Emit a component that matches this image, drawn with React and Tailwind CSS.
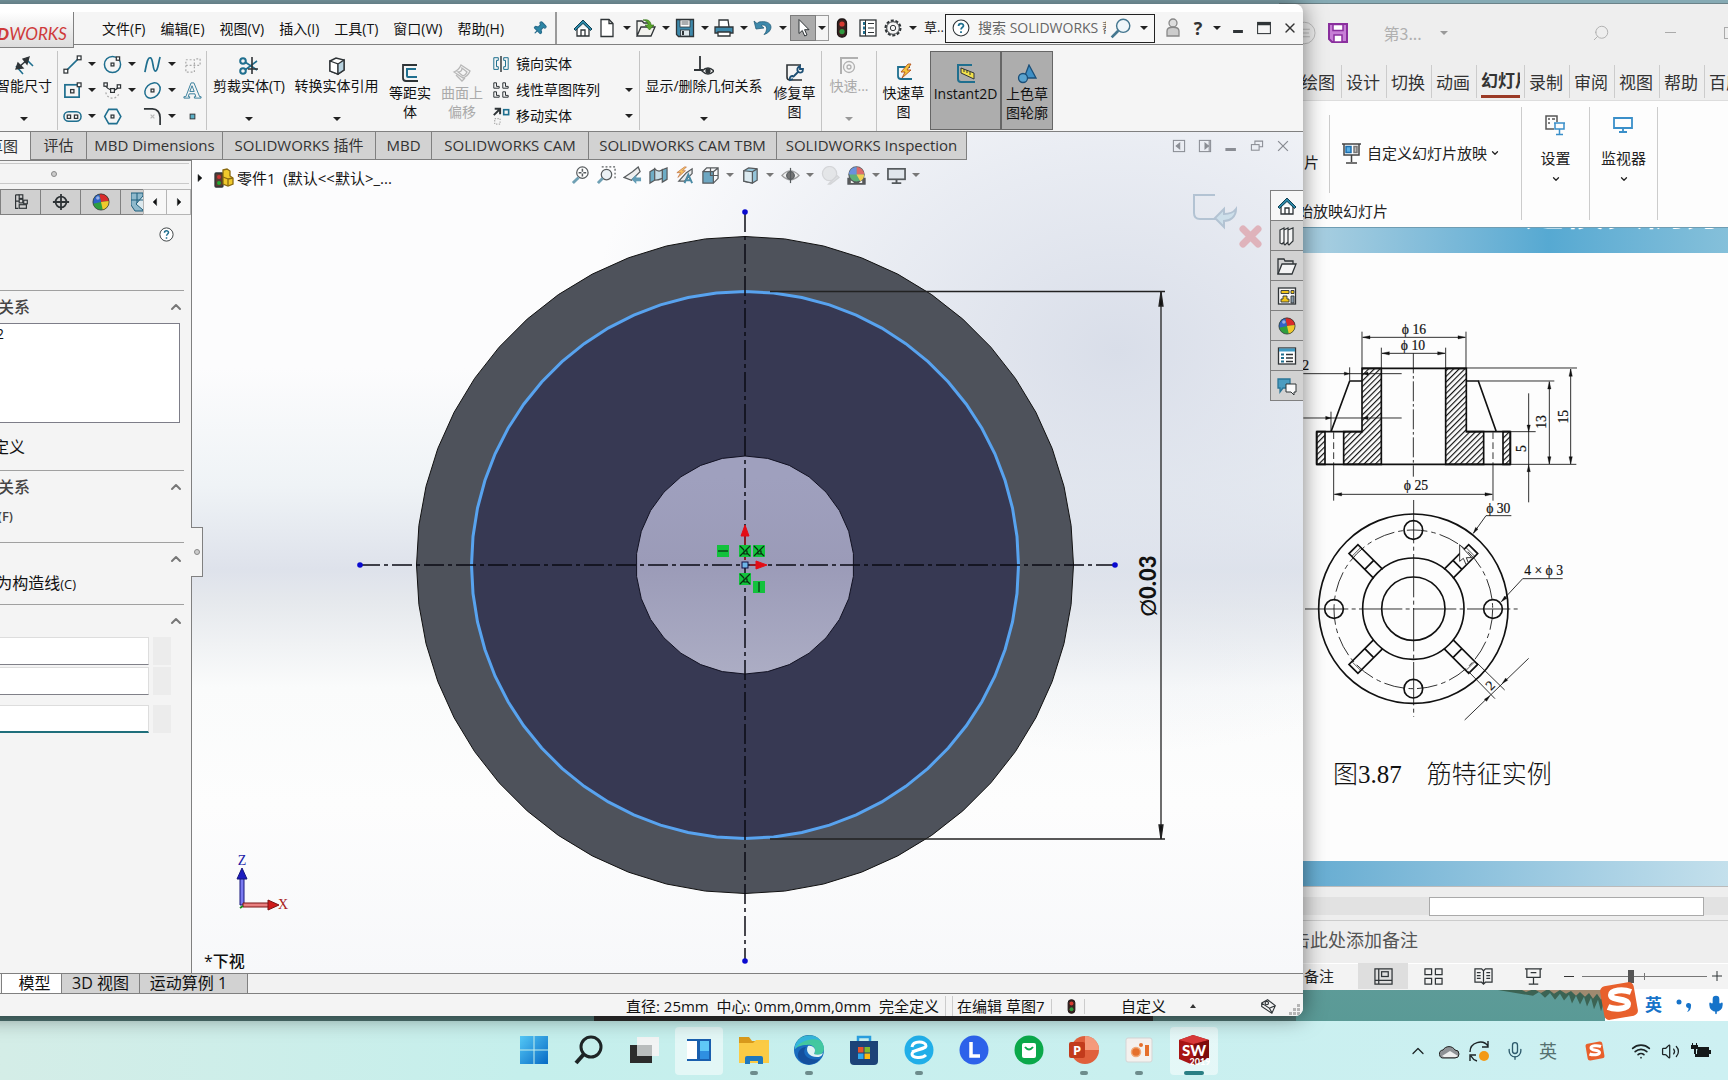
import React from 'react';
import { Pin, Wifi, Volume2, Mic, ChevronUp, ChevronDown, X, Search } from 'lucide-react';

const TEAL = '#1f6f8f';
const INK = '#2f3437';

function Ico({ children, s = 20, vb = '0 0 20 20', className = '' }) {
  return (
    <svg width={s} height={s} viewBox={vb} fill="none" stroke={INK} strokeWidth="1.3" className={`shrink-0 ${className}`} aria-hidden="true">
      {children}
    </svg>
  );
}

function Caret({ color = '#222' }) {
  return (
    <svg width="8" height="4" viewBox="0 0 8 4" className="shrink-0" aria-hidden="true">
      <path d="M0 0h8L4 4z" fill={color} />
    </svg>
  );
}

function Traffic({ s = 20 }) {
  return (
    <Ico s={s}>
      <rect x="5.5" y="1" width="9" height="18" rx="4" fill="#3a2320" stroke="#1d1515" />
      <circle cx="10" cy="6" r="2.6" fill="#d63b32" stroke="none" />
      <circle cx="10" cy="13.6" r="2.6" fill="#2f9a3f" stroke="none" />
    </Ico>
  );
}

function Ball({ s = 18 }) {
  return (
    <Ico s={s}>
      <g stroke="none">
        <circle cx="10" cy="10" r="9" fill="#2f9e3f" />
        <path d="M10 10L8 1a9 9 0 0 1 11 8z" fill="#d92b2b" />
        <path d="M10 10L8 1.2A9 9 0 0 0 1.4 12z" fill="#2f62c9" />
        <path d="M10 10l9-1a9 9 0 0 1-7 9.8z" fill="#f0c92c" />
        <circle cx="6.5" cy="5.5" r="2" fill="#fff" opacity=".5" />
      </g>
      <circle cx="10" cy="10" r="9" strokeWidth=".8" />
    </Ico>
  );
}

function House() {
  return (
    <Ico>
      <path d="M4 10v8h12v-8" fill="#fff" />
      <path d="M8 18v-6h4v6" />
      <path d="M1 11l9-9 9 9-1.5 1.5L10 5.4l-7.500 7.100z" fill="#2b87a6" stroke="#123f52" strokeWidth="1" />
    </Ico>
  );
}

function HelpRound({ s = 18 }) {
  return (
    <Ico s={s}>
      <circle cx="10" cy="10" r="8.8" fill="#fff" strokeWidth="1.2" />
      <path d="M7.300 7.800c0-3.600 5.400-3.400 5.400-.4 0 1.800-2.600 2-2.600 4.200M10 13.700v1.800" stroke={TEAL} strokeWidth="2" />
    </Ico>
  );
}

/* ---------- title bar ---------- */

const menus = ['文件(F)', '编辑(E)', '视图(V)', '插入(I)', '工具(T)', '窗口(W)', '帮助(H)'];

const fileTools = [
  {
    name: '新建',
    icon: <Ico><path d="M4 1.500h8l4 4v13H4z" fill="#fff" /><path d="M12 1.500v4h4" /></Ico>,
  },
  {
    name: '打开',
    icon: <Ico><path d="M1 18V3h5l2 2h4M1 18l4-9h14l-4 9z" fill="#f2f2ee" /><path d="M7 2c5-1 8 1 8 5h3l-4.500 5L9 7h3c0-2-1-4-5-5z" fill="#5aa52b" stroke="#2e6b12" strokeWidth=".6" /></Ico>,
  },
  {
    name: '保存',
    icon: <Ico><path d="M1.500 1.500h17v17h-15l-2-2z" fill="#3e89ab" /><rect x="5" y="2" width="10" height="7" fill="#fff" strokeWidth=".8" /><path d="M6.500 4h7M6.500 6h7" strokeWidth=".8" /><rect x="5.500" y="12" width="9" height="6" fill="#dde6ea" strokeWidth=".8" /><path d="M8 13v4" strokeWidth="2" /></Ico>,
  },
  {
    name: '打印',
    icon: <Ico><path d="M5 9V2h9l1 7" fill="#fff" /><path d="M1 9h18v6H1z" fill="#3e89ab" /><path d="M4 14h12v4H4z" fill="#fff" /></Ico>,
  },
  {
    name: '撤销',
    icon: <Ico><path d="M1 3l2 8 8-1-3-2.500c4-1.500 7 1 5 6-.5 1.500-2 3-2 3 10-3 10-15-5-12.500L4 5.500z" fill="#3e89ab" stroke="#245d78" strokeWidth=".8" /></Ico>,
  },
];

function TitleBar() {
  return (
    <div className="flex h-[33px] border-b border-[#808080] bg-[#f5f5f5]">
      <div className="flex w-[581px] shrink-0 items-center border-r-2 border-[#9a9a9a]">
        <div className="z-10 flex h-9 w-[98px] shrink-0 items-center justify-end overflow-hidden self-start border-b border-r border-[#808080] bg-gradient-to-b from-white to-[#dcdcdc] pr-1.5 pt-2 font-['Lato'] text-[17px] italic text-[#cf3a3a]">
          <b className="font-black">LID</b>WORKS
        </div>
        <nav className="flex flex-1 items-center gap-[15px] whitespace-nowrap pl-7 pt-0.5 text-sm text-[#111]">
          {menus.map((m) => (
            <button key={m}>{m}</button>
          ))}
        </nav>
        <button aria-label="固定菜单" className="mr-2">
          <Pin size={15} className="rotate-45 fill-[#2b87a6] text-[#2b6f8f]" />
        </button>
      </div>
      <div className="flex items-center pl-[13px]">
        <button aria-label="主页" className="flex w-[25px] justify-center"><House /></button>
        {fileTools.map((t) => (
          <div key={t.name} className="flex items-center">
            <button aria-label={t.name} className="flex w-6 justify-center">{t.icon}</button>
            <button aria-label={`${t.name}选项`} className="flex w-[15px] justify-center"><Caret /></button>
          </div>
        ))}
        <button aria-label="选择" className="flex h-[26px] w-[26px] items-center justify-center border border-[#7d7d7d] bg-[#ababab]">
          <Ico><path d="M6 1.500v14l3.300-3 2.400 5.500 2.300-1-2.400-5.300H16z" fill="#fff" strokeWidth="1" /></Ico>
        </button>
        <button aria-label="选择选项" className="flex h-[26px] w-[13px] items-center justify-center border border-l-0 border-[#9a9a9a]"><Caret /></button>
        <button aria-label="重建模型" className="flex w-[26px] justify-center"><Traffic /></button>
        <button aria-label="文件属性" className="flex w-[26px] justify-center">
          <Ico><rect x="2" y="2" width="16" height="16" fill="#fff" /><path d="M5 5.500h2.500M5 10h2.500M5 14.500h2.500" stroke={TEAL} strokeWidth="3" /><path d="M7.500 2v16M10 5.500h6M10 10h6M10 14.500h6" strokeWidth="1" /></Ico>
        </button>
        <button aria-label="选项" className="flex w-6 justify-center">
          <Ico><circle cx="10" cy="10" r="7.5" strokeWidth="2" strokeDasharray="3 1.700" /><circle cx="10" cy="10" r="6.3" strokeWidth="1" /><circle cx="10" cy="10" r="2.7" strokeWidth="1" /></Ico>
        </button>
        <button aria-label="选项菜单" className="flex w-[15px] justify-center"><Caret /></button>
        <span className="w-[25px] whitespace-nowrap pl-1 text-[13px] text-[#222]">草..</span>
        <div className="flex h-[29px] w-[210px] items-center border border-[#222] bg-[#f7f7f7] px-1.5">
          <HelpRound />
          <input aria-label="搜索" placeholder="搜索 SOLIDWORKS 帮助" className="ml-2 w-[133px] min-w-0 bg-transparent text-sm placeholder:text-[#666] outline-none" />
          <Ico s={22} className="ml-1"><circle cx="12" cy="8" r="6" fill="#eef6fa" stroke="#44768f" /><path d="M7.500 12.500L1.500 18.500" stroke="#44768f" strokeWidth="2.500" /></Ico>
          <span className="ml-2"><Caret /></span>
        </div>
      </div>
      <div className="ml-auto flex items-center text-[#333]">
        <button aria-label="用户" className="flex w-[26px] justify-center">
          <Ico><circle cx="10" cy="5" r="4" fill="#ddd" stroke="#888" /><path d="M4 18v-5c0-5 12-5 12 0v5z" fill="#ccc" stroke="#888" /></Ico>
        </button>
        <button className="w-6 text-lg font-bold leading-5">?</button>
        <button aria-label="帮助选项" className="flex w-[14px] justify-center"><Caret /></button>
        <button aria-label="最小化" className="flex w-7 justify-center"><Ico s={14}><path d="M3 15h14" strokeWidth="4" /></Ico></button>
        <button aria-label="最大化" className="flex w-6 justify-center"><Ico s={16}><rect x="2" y="3" width="16" height="14" /><path d="M2 4.500h16" strokeWidth="4" /></Ico></button>
        <button aria-label="关闭" className="flex w-[27px] justify-center"><X size={16} /></button>
      </div>
    </div>
  );
}

/* ---------- ribbon ---------- */

const sketchTools = [
  ['直线', true, <><path d="M3 17L17 3" stroke={TEAL} strokeWidth="1.6" /><rect x="1" y="15" width="4" height="4" fill="#fff" /><rect x="15" y="1" width="4" height="4" fill="#fff" /></>],
  ['圆', true, <><circle cx="10" cy="10" r="8.5" stroke={TEAL} strokeWidth="1.6" /><rect x="8.5" y="8.5" width="3" height="3" /><rect x="14" y="2" width="3.5" height="3.5" fill="#fff" /></>],
  ['样条曲线', true, <path d="M2 18C4 8 5 2 8 3s2 14 5 14 3-9 5-15" stroke={TEAL} strokeWidth="1.8" />],
  ['基准面', false, <path d="M3 5h9v13H3zM3 11h15V4h-6" stroke="#aaa" strokeDasharray="2 2" />],
  ['矩形', true, <><rect x="2" y="4" width="15" height="13" stroke={TEAL} strokeWidth="1.8" /><rect x="8" y="9" width="3.5" height="3.5" /><rect x="15" y="2" width="4" height="4" fill="#fff" /></>],
  ['圆弧', true, <><path d="M2 4c2 4 4 5 8 6 3 0 5-2 7-4" /><rect x="1" y="2" width="3.5" height="3.5" fill="#fff" /><rect x="8" y="8" width="4" height="4" fill="#fff" /><rect x="15" y="4" width="3.5" height="3.5" fill="#fff" /><path d="M3 12c1 8 13 8 14 0" stroke="#aaa" strokeDasharray="2 2" /></>],
  ['椭圆', true, <><ellipse cx="10" cy="10" rx="9" ry="7" transform="rotate(-45 10 10)" stroke={TEAL} strokeWidth="1.6" /><rect x="8.5" y="8.5" width="3" height="3" /></>],
  ['文字', false, <path d="M1 18h6v-1.500H5.500l1-3h6l1 3H12V18h7v-1.500h-1.500L11.500 2h-3L3 16.500H1zM7.200 11L9.500 5l2.300 6z" stroke={TEAL} strokeWidth=".9" />],
  ['槽口', true, <><rect x="1" y="5" width="18" height="10" rx="5" stroke={TEAL} strokeWidth="1.6" /><rect x="4.5" y="8.5" width="3.5" height="3.5" /><rect x="12" y="8.5" width="3.5" height="3.5" /></>],
  ['多边形', false, <><path d="M6 2.500h8.500l4.300 7.500-4.300 7.500H6L1.700 10z" stroke={TEAL} strokeWidth="1.6" /><rect x="8.5" y="8.5" width="3" height="3" /></>],
  ['圆角', true, <><path d="M1 2h9c5 0 8 4 8 9v8" strokeWidth="1.8" /><path d="M8 8l4 4M12 8l-4 4" stroke="#bbb" /></>],
  ['点', false, <rect x="7.5" y="7.5" width="5" height="5" fill="#5bb0c7" strokeWidth="1" />],
];

function RibbonButton({ icon, lines, drop, tall, disabled, active, w }) {
  return (
    <button
      disabled={disabled}
      className={`flex h-[79px] shrink-0 flex-col items-center whitespace-nowrap text-sm ${w} ${tall ? 'pt-3' : 'pt-[5px]'} ${disabled ? 'text-[#aaa]' : 'text-[#111]'} ${active ? 'border border-[#666] bg-[#adadad]' : ''}`}
    >
      <Ico>{icon}</Ico>
      {lines.map((l) => (
        <span key={l} className="leading-[19px]">{l}</span>
      ))}
      {drop && <span className="mt-[22px] flex"><Caret color={disabled ? '#999' : '#222'} /></span>}
    </button>
  );
}

const bracket = <path d="M16 4H4v9q0 3 3 3h11" stroke={TEAL} strokeWidth="1.8" />;

function Ribbon() {
  return (
    <div className="flex h-[87px] overflow-hidden border-b border-[#808080] bg-[#f5f5f5] pt-1.5">
      <div className="h-[79px] w-[82px] shrink-0 border-r border-[#c4c4c4] pl-[14px]">
        <RibbonButton w="w-[68px]" lines={['智能尺寸']} drop icon={<><path d="M2 10l7 8M12 3l7 7" stroke={TEAL} strokeWidth="1.6" /><path d="M5 11l8-7" strokeWidth="1.6" /><path d="M2 13l2-6 5 5zM15 1l-6 2 4 5z" fill={INK} /></>} />
      </div>
      <div className="grid h-[79px] w-[149px] shrink-0 grid-cols-[40px_40px_40px_24px] grid-rows-[26px_26px_26px] border-r border-[#c4c4c4] pl-[2px]">
        {sketchTools.map(([name, drop, art]) => (
          <div key={name} className="flex items-center">
            <button aria-label={name} className="flex w-6 justify-center"><Ico s={19}>{art}</Ico></button>
            {drop && <button aria-label={`${name}选项`} className="flex w-[15px] justify-center"><Caret /></button>}
          </div>
        ))}
      </div>
      <RibbonButton w="w-[84px]" lines={['剪裁实体(T)']} drop icon={<><circle cx="4" cy="5" r="2.8" stroke={TEAL} strokeWidth="2" /><circle cx="4" cy="15" r="2.8" stroke={TEAL} strokeWidth="2" /><path d="M6 6l12 8M6 14l12-9" stroke={TEAL} strokeWidth="1.6" /><path d="M13 1v17M9 13h10" strokeWidth="1.6" /></>} />
      <RibbonButton w="w-[91px]" lines={['转换实体引用']} drop icon={<><path d="M3 5l6-3 8 2v10l-6 4-8-3z" fill="#fdfdfd" strokeWidth="1.6" /><path d="M3 5l8 3v10l-8-3z" fill="#fff" /><path d="M11 8l6-4v10l-6 4z" fill="#b9d3e0" /></>} />
      <RibbonButton w="w-14" tall lines={['等距实', '体']} icon={<><path d="M17 2H3v13q0 3 3 3h12" strokeWidth="1.8" /><path d="M16 6H7v7q0 1 1 1h9" stroke={TEAL} strokeWidth="2" /></>} />
      <RibbonButton w="w-12" tall disabled lines={['曲面上', '偏移']} icon={<path d="M2 9q5-2 7-7l9 6q-2 5-7 7zM6 9q4 0 4-4l5 4q-1 3-4 4zM4 12l6 6 3-3" stroke="#b8b8b8" />} />
      <div className="h-[79px] w-[154px] shrink-0 border-r border-[#c4c4c4] text-sm text-[#111]">
        {[
          ['镜向实体', false, <><path d="M2 3v13h5v-3H5V6h2V3zM18 3v13h-5v-3h2V6h-2V3z" stroke={TEAL} strokeWidth="1.1" /><path d="M10 1v18" strokeWidth="1.6" /></>],
          ['线性草图阵列', true, <path d="M2 2v6h6V6H5V2zM12 2v6h6V6h-3V2zM2 12v6h6v-2H5v-4zM12 12v6h6v-2h-3v-4z" strokeWidth="1.1" />],
          ['移动实体', true, <><path d="M2 9l6-6M3 2h6v6" strokeWidth="2.2" /><rect x="13" y="3" width="5.5" height="5.5" stroke={TEAL} strokeWidth="1.8" /><path d="M3 13h6v6H3z" stroke="#aaa" strokeDasharray="1.500 1.500" /></>],
        ].map(([name, drop, art]) => (
          <div key={name} className="flex h-[26px] items-center">
            <button className="flex items-center"><span className="flex w-[30px] justify-center"><Ico s={18}>{art}</Ico></span>{name}</button>
            {drop && <button aria-label={`${name}选项`} className="ml-auto mr-1.5"><Caret /></button>}
          </div>
        ))}
      </div>
      <RibbonButton w="w-32" lines={['显示/删除几何关系']} drop icon={<><path d="M6 0v14M0 14h9" strokeWidth="1.8" /><path d="M8 15q6-6 12 0-6 6-12 0z" /><circle cx="14" cy="15" r="2" fill={INK} /></>} />
      <div className="shrink-0 border-r border-[#c4c4c4]">
        <RibbonButton w="w-[53px]" tall lines={['修复草', '图']} icon={<><path d="M16 2H2v12q0 3 3 3h12" strokeWidth="1.6" /><path d="M8 14l6-6M13 9q-2-4 2-6v3h3q0 5-5 3zM8 13q-4 0-3 4l3-1" stroke="#1d4f74" strokeWidth="1.8" /></>} />
      </div>
      <div className="shrink-0 border-r border-[#c4c4c4]">
        <RibbonButton w="w-[54px]" disabled drop lines={['快速...']} icon={<><circle cx="10" cy="11" r="5.5" stroke="#b0b0b0" /><circle cx="10" cy="11" r="2" stroke="#b0b0b0" /><path d="M1 2h18M2 2v16" stroke="#b0b0b0" strokeWidth="2" /></>} />
      </div>
      <RibbonButton w="w-[53px]" tall lines={['快速草', '图']} icon={<>{bracket}<path d="M14 1L7 9h4l-3 6 9-8h-4l4-6z" fill="#f5c63c" stroke="#b5541c" strokeWidth=".9" /></>} />
      <RibbonButton w="w-[71px]" tall active lines={['Instant2D']} icon={<><path d="M16 1H2v14q0 3 3 3h14" stroke={TEAL} strokeWidth="2" /><path d="M5 4l13 5v6L5 9z" fill="#f2e04a" strokeWidth="1" /><path d="M8 5v3M11 6v3M14 8v3" strokeWidth="1" /></>} />
      <RibbonButton w="w-[52px]" tall active lines={['上色草', '图轮廓']} icon={<><path d="M12 1l7 13H7z" fill="#3f8fc4" stroke="#1b4f78" /><circle cx="6" cy="14" r="4.5" fill="#5aa3cf" stroke="#1b4f78" /></>} />
    </div>
  );
}

/* ---------- command tabs ---------- */

const commandTabs = [
  ['评估', 'w-14'],
  ['MBD Dimensions', 'w-[136px]'],
  ['SOLIDWORKS 插件', 'w-[153px]'],
  ['MBD', 'w-14'],
  ['SOLIDWORKS CAM', 'w-[157px]'],
  ['SOLIDWORKS CAM TBM', 'w-[188px]'],
  ['SOLIDWORKS Inspection', 'w-[190px]'],
];

function CommandTabs() {
  return (
    <div className="flex h-[28px] shrink-0 items-stretch">
      <div className="flex text-[15px] text-[#333]">
        <button className="w-[55px] border-r border-[#808080] bg-[#f5f5f5] pr-3 text-right">草图</button>
        {commandTabs.map(([t, w]) => (
          <button key={t} className={`${w} whitespace-nowrap border-b border-r border-[#808080] bg-[#d2d2d2]`}>{t}</button>
        ))}
      </div>
      <div className="ml-auto mr-[7px] flex items-center">
        {[
          ['左窗格', <><rect x="2" y="2" width="16" height="16" /><path d="M11 6v8l-5-4z" fill="#8a8d94" /></>],
          ['右窗格', <><rect x="2" y="2" width="16" height="16" /><path d="M10 6v8l5-4zM16 2v16" fill="#8a8d94" /></>],
          ['最小化文档', <path d="M2 15h15" strokeWidth="4" />],
          ['还原文档', <><rect x="2" y="8" width="11" height="8" /><path d="M7 8V3h11v8h-5" /></>],
          ['关闭文档', <path d="M3 3l14 14M17 3L3 17" strokeWidth="1.8" />],
        ].map(([name, art]) => (
          <button key={name} aria-label={name} className="flex w-[26px] justify-center">
            <svg width="14" height="14" viewBox="0 0 20 20" fill="none" stroke="#8a8d94" strokeWidth="1.5">{art}</svg>
          </button>
        ))}
      </div>
    </div>
  );
}

/* ---------- property panel ---------- */

function SectionHead({ label }) {
  return (
    <div className="flex h-8 items-center justify-between">
      <h3 className="w-[54px] text-right text-base font-medium text-[#444]">{label}</h3>
      <button aria-label="折叠">
        <ChevronUp size={16} strokeWidth={3} className="text-[#777]" />
      </button>
    </div>
  );
}

function ParamField({ label, active }) {
  return (
    <div className="flex h-7 gap-1">
      <input aria-label={label} className={`w-[173px] border-r border-t border-[#ddd] bg-white outline-none ${active ? 'border-b-2 border-b-[#1f6f7b]' : 'border-b border-b-[#808088]'}`} />
      <button aria-label={`${label}微调`} className="w-[18px] bg-[#ececec]" />
    </div>
  );
}

function PropertyPanel() {
  return (
    <aside className="relative w-[216px] shrink-0 border-r border-t border-[#808080] bg-[#f4f4f4]">
      <div className="mr-0.5 mt-0.5 flex h-[21px] items-center border-y border-[#c9c9c9] pl-[75px]">
        <span className="h-1.5 w-1.5 rounded-full border border-[#888] bg-[#ccc]" />
      </div>
      <div className="mt-[5px] flex h-[26px] text-[#222]">
        <div className="flex border-y border-[#808080] bg-[#d0d0d0]">
          <button aria-label="特征树" className="w-[25px] border-r border-[#808080]" />
          <button aria-label="配置" className="flex w-10 items-center justify-center border-r border-[#808080]">
            <Ico s={18}><path d="M4 2v15h3M4 2h4M4 9h4" /><rect x="8" y="2" width="4" height="4" /><rect x="8" y="7" width="4" height="4" /><rect x="13" y="8" width="4" height="4" /><rect x="8" y="13" width="8" height="4" /></Ico>
          </button>
          <button aria-label="尺寸专家" className="flex w-10 items-center justify-center border-r border-[#808080]">
            <Ico s={18}><circle cx="10" cy="10" r="6" strokeWidth="2" /><path d="M10 1v18M1 10h18" strokeWidth="2" /></Ico>
          </button>
          <button aria-label="外观" className="flex w-10 items-center justify-center border-r border-[#808080]"><Ball /></button>
          <button aria-label="CAM" className="flex w-[22px] items-center justify-end">
            <svg width="12" height="20" viewBox="0 0 12 20" fill="none" stroke="#1f5f7d" aria-hidden="true"><path d="M0 1h12v18H4L0 13z" fill="#8fb9cc" /><path d="M0 8h12M6 1v10M12 4L5 12l7 6" fill="#dce9ee" /></svg>
          </button>
        </div>
        <button aria-label="向左" className="flex w-[24px] items-center justify-center border border-[#b5b5b5] bg-[#f7f7f7]"><Ico s={8}><path d="M14 1v18L5 10z" fill="#111" /></Ico></button>
        <button aria-label="向右" className="flex w-[24px] items-center justify-center border border-l-0 border-[#b5b5b5] bg-[#f7f7f7]"><Ico s={8}><path d="M6 1v18l9-9z" fill="#111" /></Ico></button>
      </div>
      <div className="flex h-[75px] items-start justify-end pr-[17px] pt-3">
        <button aria-label="帮助"><HelpRound s={15} /></button>
      </div>
      <section className="mr-[7px] h-[180px] border-t border-[#a0a0a0]">
        <SectionHead label="何关系" />
        <ul className="mr-1 h-[100px] border border-[#7d7d88] bg-white text-sm text-[#111]">
          <li className="w-[27px] text-right">2</li>
        </ul>
        <p className="mt-3 w-[49px] text-right text-base text-[#111]">定义</p>
      </section>
      <section className="mr-[7px] h-[72px] border-t border-[#a0a0a0]">
        <SectionHead label="何关系" />
        <button className="mt-1 block w-[37px] text-right text-[13px] font-semibold text-[#444]">(F)</button>
      </section>
      <section className="mr-[7px] h-[62px] border-t border-[#a0a0a0]">
        <SectionHead label="" />
        <p className="w-[100px] whitespace-nowrap text-right text-base leading-4 text-[#111]">作为构造线<span className="text-[13px]">(C)</span></p>
      </section>
      <section className="mr-[7px] border-t border-[#a0a0a0]">
        <SectionHead label="" />
        <div className="flex flex-col gap-0.5">
          <ParamField label="X 坐标" />
          <ParamField label="Y 坐标" />
          <div className="mt-2"><ParamField label="半径" active /></div>
        </div>
      </section>
      <button aria-label="隐藏面板" className="absolute -right-3 top-[366px] flex h-[50px] w-3 items-center justify-center border border-l-0 border-[#808080] bg-[#f4f4f4]">
        <span className="h-1.5 w-1.5 rounded-full border border-[#888] bg-[#ccc]" />
      </button>
    </aside>
  );
}

/* ---------- graphics area ---------- */

const CX = 745;
const CY = 565;

function ring(r, n) {
  return Array.from({ length: n }, (_, i) => {
    const a = (i / n) * Math.PI * 2 - Math.PI / 2;
    return `${(CX + r * Math.cos(a)).toFixed(1)},${(CY + r * Math.sin(a)).toFixed(1)}`;
  }).join(' ');
}

function Relation({ x, y, d }) {
  return (
    <g transform={`translate(${x - 6} ${y - 6})`}>
      <rect width="12" height="12" fill="#12c23c" />
      <path d={d} stroke="#0b2b12" strokeWidth="1.2" fill="none" />
    </g>
  );
}

const coincident = 'M1 1l4 4M11 1L1 11M8 8l3 3M5 6h3v3H5z';

function SketchCanvas() {
  return (
    <svg viewBox="192 160 1111 813" className="absolute inset-0 h-full w-full" aria-label="草图">
      <defs>
        <linearGradient id="bore" x1="0" y1="0" x2="0" y2="1">
          <stop offset=".1" stopColor="#9fa0be" />
          <stop offset=".5" stopColor="#9b9bb8" />
          <stop offset="1" stopColor="#acadc4" />
        </linearGradient>
      </defs>
      <polygon points={ring(328.5, 52)} fill="#4e525b" stroke="#111" />
      <polygon points={ring(273.5, 60)} fill="#373953" stroke="#58a3ef" strokeWidth="3" />
      <polygon points={ring(109, 30)} fill="url(#bore)" stroke="#111122" />
      <g stroke="#0b0b14" strokeWidth="1.5" strokeDasharray="20 4 4 4">
        <path d="M360 565H1115" />
        <path d="M745 212V961" />
      </g>
      <g fill="#0a0ad0">
        <circle cx="360" cy="565" r="2.8" />
        <circle cx="1115" cy="565" r="2.8" />
        <circle cx="745" cy="212" r="2.8" />
        <circle cx="745" cy="961" r="2.8" />
      </g>
      <g stroke="#222" strokeWidth="1.3">
        <path d="M770 291.500H1165M770 839H1165M1161 292V839" />
        <path d="M1161 292l-2 14h4zM1161 839l-2-14h4z" fill="#111" />
      </g>
      <text transform="translate(1156 586) rotate(-90)" textAnchor="middle" fontFamily="Lato, sans-serif" fontSize="22" fontWeight="900" fill="#111">
        <tspan fontWeight="400">Ø</tspan>0.03
      </text>
      <g fill="#e30d16" stroke="#e30d16">
        <path d="M745 560V535M750 565h8" />
        <path d="M745 525l4 11h-8zM767 565l-11-4v8z" />
      </g>
      <Relation x={723} y={551} d="M1 6h10" />
      <Relation x={745} y={551} d={coincident} />
      <Relation x={759} y={551} d={coincident} />
      <Relation x={745} y={579} d={coincident} />
      <Relation x={759} y={587} d="M6 1v10" />
      <rect x="742" y="562" width="6" height="6" fill="#6db6e8" stroke="#111144" />
      {/* view triad */}
      <g>
        <path d="M240 905v-28h4v28z" fill="#7a7af0" stroke="#15157a" />
        <path d="M242 868l5 11h-10z" fill="#1c1cc0" stroke="#15157a" />
        <path d="M243 903h26v4h-26z" fill="#e98080" stroke="#7a1515" />
        <path d="M279 905l-11-5v10z" fill="#cf1c1c" stroke="#7a1515" />
        <text x="242" y="865" textAnchor="middle" fontFamily="Liberation Serif, serif" fontSize="14" fill="#2020a8">Z</text>
        <text x="283" y="909" textAnchor="middle" fontFamily="Liberation Serif, serif" fontSize="14" fill="#a82020">X</text>
        <path d="M240 908l3-2" stroke="#1a8a1a" strokeWidth="2" />
      </g>
    </svg>
  );
}

const viewTools = [
  ['整屏显示全图', false, <><circle cx="12" cy="7" r="6" fill="#fff" /><path d="M8 12l-6 6" stroke="#4c8aa3" strokeWidth="3" /><path d="M12 3v8M8 7h8" strokeDasharray="3 2" strokeWidth="1.6" /></>],
  ['局部放大', false, <><circle cx="10" cy="9" r="5.5" fill="#e6eef2" /><path d="M6 13l-5 5" stroke="#4c8aa3" strokeWidth="3" /><path d="M5 1h14v12" strokeDasharray="2 2" /></>],
  ['上一视图', false, <><path d="M1 12l9-6 6-5 2 5-9 9z" fill="#ececec" /><path d="M9 14l5-5v3h5v4h-5v3z" fill="#3f86a5" stroke="none" /></>],
  ['剖面视图', false, <><path d="M1 6l5-3v12l-5 3zM14 4l5-2v12l-5 3z" fill="#4c9ab9" /><path d="M6 3q4 4 8 1v9q-4 2-8 2z" fill="#b9d6e2" /></>],
  ['动态注解视图', false, <><path d="M4 16l8-9 6-4v5l-8 8z" fill="#e6e6e6" /><path d="M10 1L2 7h4l-3 5 8-7H8l4-4z" fill="#f5b63c" stroke="#b5541c" strokeWidth=".8" /><path d="M10 18l4-9 4 9M11.500 15h5" stroke={TEAL} strokeWidth="2" /></>],
  ['视图定向', true, <><path d="M2 6h11v12H2z" fill="#4c93b5" /><path d="M2 6l4-4h12v11l-5 5M13 6l5-4M10 2v8h8" /></>],
  ['显示样式', true, <><path d="M3 5l5-3 9 1v12l-5 3-9-2z" fill="#7fb9d3" /><path d="M3 5l9 1v12l-9-2z" fill="#d5e8f0" /><path d="M12 6l5-3" /></>],
  ['隐藏/显示项目', true, <><path d="M1 10q9-10 18 0-9 9-18 0z" fill="#eee" stroke="#888" /><circle cx="10" cy="10" r="4" fill="#555" /><path d="M10 2v16" /></>],
  ['编辑外观', false, <g opacity=".4" stroke="#999"><circle cx="9" cy="8" r="7.5" fill="#ccc" /><path d="M8 19l9-9 2 2-9 7z" fill="#bbb" /></g>],
  ['应用布景', true, <><path d="M1 13h18v6H1z" fill="#333" /><path d="M4 15h3v3H4zM13 15h3v3h-3z" fill="#eee" stroke="none" /><circle cx="10" cy="9" r="8" fill="#3aa15a" /><path d="M10 9V1a8 8 0 0 1 8 8z" fill="#d94a4a" stroke="none" /><path d="M10 9H2a8 8 0 0 1 8-8z" fill="#4a78d9" stroke="none" /><path d="M10 9h8a8 8 0 0 1-4 7z" fill="#f0c92c" stroke="none" /></>],
  ['视图设定', true, <><rect x="1" y="3" width="18" height="11" fill="#dde4ea" strokeWidth="1.8" /><path d="M10 14v4M5 18h10" strokeWidth="2" /></>],
];

const taskPanes = [
  ['主页', <House />],
  ['设计库', <Ico><path d="M3 4l4-2v14l-2 2-2-1zM7 4l4-2v14l-3 3-1-1zM11 4l5-2v13l-4 4-1-1z" fill="#f4f4f4" strokeWidth="1.2" /></Ico>],
  ['文件探索器', <Ico><path d="M1 18V3h6l1 2h8v3" /><path d="M1 18l4-10h14l-4 10z" fill="#f4f4f4" /></Ico>],
  ['视图调色板', <Ico><rect x="1.5" y="2" width="17" height="16" fill="#f7f7f7" /><path d="M4 4.500h8v3H4zM14 4.500h3v3h-3zM6 10h4v3h2v3H4v-3h2z" fill="#f0c418" strokeWidth=".9" /><path d="M14 10h3v7h-3z" fill="#8899a8" strokeWidth=".9" /></Ico>],
  ['外观', <Ball />],
  ['自定义属性', <Ico><rect x="1.5" y="2" width="17" height="16" fill="#fff" /><path d="M2 4h16" stroke="#3f9bc4" strokeWidth="3" /><path d="M4 8.500h3M4 12h3M4 15.500h3" stroke={TEAL} strokeWidth="2.2" /><path d="M9 8.500h7M9 12h7M9 15.500h7" /></Ico>],
  ['论坛', <Ico><path d="M1 3h12v9H6l-3 4v-4H1z" fill="#4b9cc0" stroke="#2b7596" /><path d="M9 8h10v8h-2v3l-3-3H9z" fill="#fafafa" strokeWidth="1" /></Ico>],
];

function Viewport() {
  return (
    <main className="relative min-w-0 flex-1">
      <SketchCanvas />
      <div className="relative flex h-8 items-center">
        <button className="flex w-[375px] items-center whitespace-nowrap pl-1 pt-1 text-[#111]">
          <Ico s={8}><path d="M5 1v18l10-9z" fill="#111" /></Ico>
          <Ico s={20} className="ml-2.5">
            <rect x="1" y="5" width="8" height="14" rx="1" fill="#5a3b30" /><circle cx="5" cy="9" r="2" fill="#c33" stroke="none" /><circle cx="5" cy="15" r="2" fill="#2a3" stroke="none" />
            <path d="M9 2l4-1 3 2v5l3 2v6l-5 2-5-2z" fill="#f0c92c" stroke="#8a6a10" /><path d="M9 9l5 2v7M14 11l5-1" stroke="#8a6a10" />
          </Ico>
          <span className="ml-[3px] whitespace-pre text-[15px]">零件1  (默认&lt;&lt;默认&gt;_...</span>
        </button>
        <div className="flex items-center pb-0.5">
          {viewTools.map(([name, drop, art]) => (
            <div key={name} className="flex items-center">
              <button aria-label={name} className="flex w-[26px] justify-center"><Ico s={19} className="opacity-80">{art}</Ico></button>
              {drop && <button aria-label={`${name}选项`} className="flex w-[14px] justify-center"><Caret color="#777" /></button>}
            </div>
          ))}
        </div>
      </div>
      <button aria-label="退出草图" className="absolute right-[65px] top-[33px]">
        <svg width="46" height="38" viewBox="0 0 46 38" fill="none" stroke="#b3c3d3" strokeWidth="2"><path d="M23 2H2v18q0 6 6 6h16" /><path d="M44 16c0 8-6 12-12 12v6l-9-9 9-9v5c6 0 9-1 12-5z" fill="#cddfea" /></svg>
      </button>
      <button aria-label="取消" className="absolute right-[40px] top-[64px]">
        <svg width="25" height="25" viewBox="0 0 25 25"><path d="M5 5l15 15M20 5L5 20" stroke="#dfb3bb" strokeWidth="7" strokeLinecap="round" /></svg>
      </button>
      <div className="absolute right-0 top-[30px] flex w-[33px] flex-col border-l border-t border-[#808080]">
        {taskPanes.map(([name, icon], i) => (
          <button key={name} aria-label={name} className={`flex h-[30px] items-center justify-center border-b border-[#808080] ${i === 0 ? 'bg-[#f7f7f7]' : 'bg-[#d2d2d2]'}`}>{icon}</button>
        ))}
      </div>
      <p className="absolute bottom-0 left-3 text-base font-medium text-[#111]">*下视</p>
    </main>
  );
}

function SolidWorksWindow() {
  return (
    <div className="relative z-10 -ml-6 mb-[5px] mt-1 flex min-w-0 flex-1 flex-col overflow-hidden rounded-r-lg bg-white pt-2 shadow-[0_0_22px_rgba(0,0,0,0.5)]">
      <TitleBar />
      <Ribbon />
      <div className="flex flex-1 flex-col bg-[radial-gradient(ellipse_40%_48%_at_86%_26%,#d9dee9_0%,#dde2ec99_50%,transparent_100%),linear-gradient(to_bottom,#fcfcfd_28%,#eff3f6_42%,#dee2eb_52%,#e6e9ed_56%,#fafbfb_66%,#fdfdfd_80%,#f7f8fa_100%)]">
        <CommandTabs />
        <div className="flex flex-1">
          <PropertyPanel />
          <Viewport />
        </div>
      </div>
      <div className="flex h-[21px] border-y border-[#808080] bg-[#f2f2f2] pl-[25px] text-base leading-[19px] text-[#111]">
        <button className="w-[61px] border-l border-r border-[#808080] bg-white pl-1.5">模型</button>
        <button className="w-[78px] whitespace-nowrap border-r border-[#808080] bg-[#d2d2d2]">3D 视图</button>
        <button className="w-[108px] border-r border-[#808080] bg-[#d2d2d2] pr-2.5">运动算例 1</button>
      </div>
      <div className="flex h-[22px] items-center justify-end whitespace-nowrap bg-[#f4f4f4] pt-0.5 text-[15px] leading-5 text-[#111]">
        <span>直径: 25mm&nbsp; 中心: 0mm,0mm,0mm&nbsp; 完全定义</span>
        <span className="ml-1.5 h-5 w-2 border-x border-[#ccc]" />
        <span className="w-[98px] pl-1">在编辑 草图7</span>
        <span className="flex w-[34px] justify-center border-x border-[#ccc] pl-2"><Traffic s={15} /></span>
        <button className="flex items-center gap-6 pl-9">自定义<svg width="6" height="4" viewBox="0 0 6 4" aria-hidden="true"><path d="M3 0l3 4H0z" fill="#333" /></svg></button>
        <Ico s={17} className="ml-16"><path d="M2 6l7-4 9 7-4 9-12-8zM2 6l9 6 7-3M11 12l3 5" /><circle cx="8" cy="6" r="2" /></Ico>
        <svg width="12" height="12" viewBox="0 0 12 12" className="ml-3 mr-0.5 self-end" fill="#b5b5b5" aria-hidden="true"><path d="M8 0h3v3H8zM4 4h3v3H4zM8 4h3v3H8zM0 8h3v3H0zM4 8h3v3H4zM8 8h3v3H8z" /></svg>
      </div>
    </div>
  );
}

/* ---------- presentation window ---------- */

const pptTabs = ['绘图', '设计', '切换', '动画', '幻灯片', '录制', '审阅', '视图', '帮助', '百度'];

function PptRibbon() {
  return (
    <div className="flex h-[126px] shrink-0 bg-[#fdfdfd] text-[15px] text-[#222]">
      <div className="w-[242px] shrink-0">
        <div className="flex h-[102px]">
          <span className="w-[50px] pl-[25px] pt-[50px]">片</span>
          <span className="mt-[14px] h-[78px] w-px bg-[#ccc]" />
          <button className="flex h-[104px] items-center whitespace-nowrap pl-3">
            <svg width="19" height="21" viewBox="0 0 19 21" fill="none" stroke="#444" strokeWidth="1.5" aria-hidden="true"><path d="M0 1h19M2 1v11h15V1M9.500 12v7M4 20h11" /><rect x="4" y="3.5" width="5" height="6" fill="#5ab0e6" stroke="#1d6fae" /><rect x="12" y="3.5" width="3" height="6" fill="#bbb" stroke="#777" /></svg>
            <span className="ml-1.5">自定义幻灯片放映</span>
            <ChevronDown size={10} strokeWidth={3} className="ml-[3px]" />
          </button>
        </div>
        <p className="-mt-0.5 pl-[19px] leading-5">始放映幻灯片</p>
      </div>
      {[
        ['设置', <><path d="M9 14H1V1h11v6M3 4h2M3 8h2M7 4h3" stroke="#555" /><path d="M9 8h11M10 8v6h9V8M14.500 14v5M11 19.500h7" stroke="#3a8fc9" /></>],
        ['监视器', <path d="M1 3h18v10H1zM10 13v4M6 17h8" stroke="#3a8fc9" strokeWidth="1.8" />],
      ].map(([name, art]) => (
        <button key={name} className="mt-1.5 flex h-[113px] w-[68px] flex-col items-center border-l border-[#ccc] pt-2">
          <svg width="21" height="21" viewBox="0 0 21 21" fill="none" strokeWidth="1.5" aria-hidden="true">{art}</svg>
          <span className="mt-3 leading-5">{name}</span>
          <ChevronDown size={10} strokeWidth={3} className="mt-1.5" />
        </button>
      ))}
      <span className="mt-1.5 h-[113px] w-px bg-[#ccc]" />
    </div>
  );
}

function Rib({ angle }) {
  return (
    <g transform={`rotate(${angle} 370 387)`}>
      <path d="M519 368h105v38H519M557 368v38" />
      <path d="M612 368v38" strokeWidth="2" />
    </g>
  );
}

function PartDrawing() {
  return (
    <svg viewBox="1279 253 449 608" className="h-full w-full" fill="none" stroke="#111" aria-label="筋特征零件图">
      <defs>
        <pattern id="hatch" width="12" height="12" patternUnits="userSpaceOnUse" patternTransform="rotate(45)">
          <path d="M0 0v12" stroke="#111" strokeWidth="7" />
        </pattern>
      </defs>
      <g transform="translate(1240 180) scale(.33333)" strokeWidth="5">
        <path d="M366 565h58v288H311v-98h55zM617 565h62v190h52v98H617zM230 755h25v98h-25zM789 755h22v98h-22z" fill="url(#hatch)" />
        <path d="M366 565h313M230 755h136M679 755h132M230 853h581M230 755v98M811 755v98M366 603h-37l-56 152M679 603h36l54 152" />
        <g strokeWidth="2.6">
          <path d="M679 564h332M715 603h228M811 755h76M811 853h198M366 455v110M678 455v110M424 503v62M617 503v62M368 472h308M426 520h189M190 581h295M190 714h295M329 562v38M273 695v60M281 853v109M759 853v109M283 943h474M866 640v327M928 605v247M992 567v285" />
          <path d="M520 520v370" strokeDasharray="60 8 8 8" />
          <path d="M281 757v96M759 757v96" strokeDasharray="20 10" />
        </g>
        <path d="M368 472l22-5v10zM676 472l-22-5v10zM426 520l22-5v10zM615 520l-22-5v10zM283 943l22-5v10zM757 943l-22-5v10zM329 581l-16-5v10zM273 714l-16-5v10zM368 581l16-5v10zM368 714l16-5v10zM928 605l-5 22h10zM928 852l-5-22h10zM992 567l-5 22h10zM992 852l-5-22h10zM866 755l-5-20h10zM866 855l-5 20h10z" fill="#111" strokeWidth="1" />
        <g fill="#111" stroke="#111" strokeWidth=".6" fontFamily="Liberation Serif, serif" fontSize="41" textAnchor="middle">
          <text x="522" y="461">ϕ 16</text>
          <text x="519" y="509">ϕ 10</text>
          <text x="528" y="930">ϕ 25</text>
          <text x="775" y="998">ϕ 30</text>
          <text x="197" y="570">2</text>
          <text transform="translate(858 806) rotate(-90)">5</text>
          <text transform="translate(917 726) rotate(-90)">13</text>
          <text transform="translate(984 710) rotate(-90)">15</text>
        </g>
      </g>
      <g transform="translate(1290 480) scale(.33333)" strokeWidth="5">
        <circle cx="370" cy="386" r="284" />
        <circle cx="370" cy="386" r="152" />
        <circle cx="370" cy="386" r="95" />
        <circle cx="370" cy="388" r="238" strokeWidth="2.6" strokeDasharray="62 12 14 12" />
        <circle cx="370" cy="150" r="28" />
        <circle cx="370" cy="626" r="28" />
        <circle cx="132" cy="387" r="28" />
        <circle cx="609" cy="387" r="28" />
        <Rib angle={45} />
        <Rib angle={135} />
        <Rib angle={225} />
        <Rib angle={315} />
        <g strokeWidth="2.6">
          <path d="M45 387h648M371 60v650" strokeDasharray="130 10 12 10" />
          <path d="M550 160l38-53h76M634 365l64-69h120M560 548l84 82M535 574l80 82M716 535L524 720" />
        </g>
        <path d="M550 160l7-18 7 6zM634 365l10-17 7 7zM636 611l11-17 6 7zM600 647l-17 11 7 6z" fill="#111" strokeWidth="1" />
        <path d="M509 194v50l11-9 8 18 7-4-6-16h16z" fill="#fff" strokeWidth="2.5" />
        <g fill="#111" stroke="#111" strokeWidth=".6" fontFamily="Liberation Serif, serif" fontSize="41" textAnchor="middle">
          <text x="761" y="285">4 × ϕ 3</text>
          <text transform="translate(610 626) rotate(-45)">2</text>
        </g>
      </g>
    </svg>
  );
}

function PresentationWindow() {
  return (
    <div className="-ml-6 mb-[31px] mt-[3px] flex w-[449px] shrink-0 flex-col overflow-hidden bg-[#eee] font-['Noto_Sans_CJK_SC',sans-serif]">
      <div className="flex h-[62px] shrink-0 items-center border-t border-[#6b8288] pb-1 pl-[14px] text-base text-[#b0b0b0]">
        <svg width="24" height="24" viewBox="0 0 24 24" fill="none" stroke="#bbb" aria-hidden="true"><circle cx="12" cy="12" r="11.5" /><path d="M8 8h10M8 12h9M8 16h10" /></svg>
        <button aria-label="保存" className="ml-3">
          <svg width="20" height="20" viewBox="0 0 20 20"><path d="M1 1h18v18H4l-3-3z" fill="#c77fd6" stroke="#8a2f9e" strokeWidth="2" /><path d="M5 1.500h10v6H5zM6 12h8v7H6z" fill="#fff" stroke="#8a2f9e" strokeWidth="1.5" /></svg>
        </button>
        <span className="ml-9 w-[60px]">第3...</span>
        <Caret color="#999" />
        <button aria-label="搜索演示文稿" className="ml-36"><Search size={18} strokeWidth={1.3} className="-scale-x-100" /></button>
        <button aria-label="最小化演示" className="ml-[55px] h-px w-3 bg-[#aaa]" />
        <span className="ml-12 h-3 w-1 shrink-0 border border-r-0 border-[#aaa]" />
      </div>
      <div className="flex h-[36px] shrink-0 items-start border-b border-[#ddd] pl-[18px] text-[17px] leading-[30px] text-[#333]">
        {pptTabs.map((t) => (
          <button key={t} className={`h-[33px] shrink-0 overflow-hidden whitespace-nowrap border-r border-[#ccc] pl-1 text-left ${t === '幻灯片' ? 'w-12 pr-1 font-bold' : 'w-[45px]'}`}>
            {t === '幻灯片' ? <span className="block h-[33px] overflow-hidden border-b-[3px] border-[#9b3a26]">{t}</span> : t}
          </button>
        ))}
      </div>
      <PptRibbon />
      <div className="h-[26px] shrink-0 overflow-hidden border-t border-[#6f9db3] bg-gradient-to-r from-[#a5cde0] from-10% via-[#56a9d2] via-60% to-[#85c0da] pl-[246px]">
        <p className="-mt-[43px] whitespace-nowrap text-[40px] font-medium italic leading-[48px] text-white">建模实例分析</p>
      </div>
      <div className="relative min-h-0 flex-1 bg-[#fdfdfd]">
        <PartDrawing />
        <p className="absolute left-[54px] top-[503px] whitespace-pre font-['Liberation_Serif','Noto_Sans_CJK_SC',serif] text-[25px] font-light leading-[38px] text-[#111]">图3.87　筋特征实例</p>
      </div>
      <div className="h-[26px] shrink-0 border-b border-[#bbb] bg-gradient-to-r from-[#5fa9d0] to-[#c4e0ec]" />
      <div className="h-[34px] shrink-0 border-b border-[#ccc] py-2.5">
        <div className="flex h-[18px] justify-end bg-[#e2e2e2] pr-6">
          <div className="h-[19px] w-[275px] shrink-0 border border-[#aaa] bg-white" />
        </div>
      </div>
      <p className="h-[42px] shrink-0 pl-[13px] text-lg leading-[37px] text-[#555]">击此处添加备注</p>
      <div className="flex h-[27px] shrink-0 items-center border-t border-white bg-[#f3f3f3] pb-0.5 pl-[25px] text-[15px] text-[#222]">
        <button className="w-[54px] text-left">备注</button>
        <button aria-label="普通视图" className="flex h-[26px] w-[50px] items-center justify-center bg-[#dedede]"><Ico s={19}><path d="M1 2h18v16H1zM5 2v16M1 14h18" /><rect x="8" y="5" width="7" height="5" /></Ico></button>
        <button aria-label="幻灯片浏览" className="flex w-[50px] justify-center"><Ico s={19}><path d="M1 2h7v6H1zM12 2h7v6h-7zM1 12h7v6H1zM12 12h7v6h-7z" /></Ico></button>
        <button aria-label="阅读视图" className="flex w-[50px] justify-center"><Ico s={19}><path d="M1 2h7l2 2 2-2h7v14h-7l-2 2-2-2H1zM10 4v14M3 6h4M3 9h4M3 12h4M13 6h4M13 9h4M13 12h4" /></Ico></button>
        <button aria-label="放映" className="flex w-[50px] justify-center"><Ico s={19}><path d="M1 2h18M3 2v9h14V2M10 11v7M5 18h10M7 6h6" /></Ico></button>
        <button aria-label="缩小" className="ml-1.5 mr-2 h-px w-2.5 shrink-0 bg-[#333]" />
        <input
          type="range"
          aria-label="缩放"
          defaultValue="39"
          className="h-[13px] w-[125px] appearance-none bg-[linear-gradient(#777,#777),linear-gradient(#777,#777)] bg-[length:100%_1px,1px_7px] bg-center bg-no-repeat [&::-webkit-slider-thumb]:h-[13px] [&::-webkit-slider-thumb]:w-1.5 [&::-webkit-slider-thumb]:appearance-none [&::-webkit-slider-thumb]:bg-[#555]"
        />
        <button aria-label="放大" className="ml-[5px]"><Ico s={10}><path d="M10 0v20M0 10h20" strokeWidth="2" /></Ico></button>
      </div>
    </div>
  );
}

function SogouMark({ s = 20 }) {
  return (
    <svg width={s} height={s} viewBox="0 0 40 40" aria-hidden="true">
      <rect x="3" y="3" width="34" height="34" rx="5" fill="#e8602c" transform="rotate(-10 20 20)" />
      <path d="M32 11c-8-3-20-2-20 3 0 6 17 3 17 9 0 5-13 6-20 3" fill="none" stroke="#fff" strokeWidth="6" />
    </svg>
  );
}

function ImeBar() {
  return (
    <div className="absolute bottom-0 right-0 z-20 flex h-8 items-center bg-white text-[#1673c9]">
      <span className="-ml-1.5 -mt-2"><SogouMark s={40} /></span>
      <button className="ml-1.5 text-[17px] font-bold">英</button>
      <button aria-label="中英标点" className="ml-3.5"><svg width="16" height="18" viewBox="0 0 16 18" fill="currentColor"><circle cx="3" cy="6" r="2.5" /><path d="M10 9a2.500 2.500 0 1 1 5 1q0 5-4 6 2-2 1.500-4-2.500 0-2.500-3z" /></svg></button>
      <button aria-label="语音输入" className="ml-3.5 mr-0.5"><Mic size={20} className="fill-[#1673c9]" /></button>
    </div>
  );
}

/* ---------- taskbar ---------- */

function Disc({ from, children }) {
  return (
    <svg width="30" height="30" viewBox="0 0 30 30" aria-hidden="true">
      <circle cx="15" cy="15" r="14.5" fill={from} />
      {children}
    </svg>
  );
}

const apps = [
  { name: '开始', art: <svg width="30" height="30" viewBox="0 0 30 30"><defs><linearGradient id="win" x2="1" y2="1"><stop stopColor="#55c9f7" /><stop offset="1" stopColor="#0669c4" /></linearGradient></defs><path d="M1 1h13.500v13.500H1zM15.500 1H29v13.500H15.500zM1 15.500h13.500V29H1zM15.500 15.500H29V29H15.500z" fill="url(#win)" /></svg> },
  { name: '搜索', art: <svg width="30" height="30" viewBox="0 0 30 30" fill="none" stroke="#1e2526" strokeWidth="3"><circle cx="17" cy="12" r="10" /><path d="M10 19l-8 9" strokeWidth="4" /></svg> },
  { name: '任务视图', art: <svg width="30" height="30" viewBox="0 0 30 30"><path d="M1 10h22v18H1z" fill="#2c2c2c" /><path d="M8 2h22v19H8z" fill="#f2f4f4" /><path d="M8 10h15v11H8z" fill="#b9bdbd" /></svg> },
  { name: '小组件', hot: true, art: <svg width="26" height="26" viewBox="0 0 26 26"><path d="M1 2h24v22H1z" fill="#1a5fae" /><path d="M1 4h10v18H1z" fill="#fff" /><path d="M14 4h9v10h-9z" fill="#5fc8f7" /><path d="M14 14h9v8h-9z" fill="#2f8fe0" /></svg> },
  { name: '文件资源管理器', dot: true, art: <svg width="32" height="30" viewBox="0 0 32 30"><path d="M1 2h10l3 4h17v8H1z" fill="#d99a1c" /><path d="M1 8h14l3-3h13v23H1z" fill="#fbcb45" /><path d="M7 29v-6q0-2 2-2h14q2 0 2 2v6h-5v-3h-8v3z" fill="#1f78bd" /></svg> },
  { name: 'Edge', dot: true, art: <svg width="32" height="32" viewBox="0 0 32 32"><circle cx="16" cy="16" r="15" fill="#1a6cbf" /><path d="M2 13C5-3 29-2 31 14c0 7-6 8-10 6 3-5-1-10-7-9-6 0-10 2-12 4z" fill="#43c8a0" /><path d="M2 12C6 0 22-1 28 7c-8-4-20-1-26 8z" fill="#35b5dd" /><path d="M13 13c-5 6 1 15 14 12-5 7-18 8-22-2-1-6 4-10 8-10z" fill="#14509e" /><path d="M21 20c3-5-1-9-6-8-3 5 1 12 11 11 3-1 3-2 4-4-3 2-6 2-9 1z" fill="#dff4f4" /></svg> },
  { name: '应用商店', art: <svg width="30" height="32" viewBox="0 0 30 32"><path d="M9 8V3h12v5" fill="none" stroke="#2a9fe0" strokeWidth="2.5" /><path d="M1 7h28v20q0 4-4 4H5q-4 0-4-4z" fill="#1d4378" /><path d="M9 13h5.500v5.500H9z" fill="#e8532b" /><path d="M15.500 13H21v5.500h-5.500z" fill="#7fba2c" /><path d="M9 19.500h5.500V25H9z" fill="#2fa8ec" /><path d="M15.500 19.500H21V25h-5.500z" fill="#fcba12" /></svg> },
  { name: '浏览器', dot: true, art: <Disc from="#21aee8"><path d="M8 12c1-7 14-6 14-1 0 4-14 3-14 8 0 4 10 5 14 1M8 17l14-5" fill="none" stroke="#fff" strokeWidth="3" /></Disc> },
  { name: '联想', art: <Disc from="#2d62ea"><path d="M12 7v14h9" fill="none" stroke="#fff" strokeWidth="3.5" /></Disc> },
  { name: '应用中心', art: <Disc from="#0ba84a"><rect x="8" y="8" width="14" height="15" rx="2" fill="#fff" /><path d="M11 12q4 5 8 0" fill="none" stroke="#0ba84a" strokeWidth="2" /></Disc> },
  { name: 'PowerPoint', dot: true, art: <svg width="32" height="30" viewBox="0 0 32 30"><circle cx="17" cy="15" r="14" fill="#e0603c" /><path d="M17 1a14 14 0 0 1 14 14H17z" fill="#f59a7b" /><rect x="1" y="7" width="16" height="16" rx="2" fill="#c23b1c" /><text x="9" y="20" textAnchor="middle" fontFamily="Open Sans, sans-serif" fontSize="13" fontWeight="700" fill="#fff">P</text></svg> },
  { name: '录屏', dot: true, art: <svg width="28" height="26" viewBox="0 0 28 26"><rect x="1" y="1" width="26" height="24" rx="2" fill="#f4f1ee" stroke="#d5d5d5" /><circle cx="11" cy="15" r="4.5" fill="#e5702c" stroke="#f0a878" strokeWidth="1.5" /><path d="M20 8h4v11h-4z" fill="#e5702c" /><circle cx="16" cy="8" r="2" fill="#e5702c" /></svg> },
  { name: 'SOLIDWORKS 2019', hot: true, wide: true, art: <svg width="32" height="32" viewBox="0 0 32 32"><path d="M1 6l14-5 16 5v18l-16 7-14-6z" fill="#a81515" /><path d="M1 6l15 4 15-4-16-5z" fill="#d93a3a" /><path d="M16 10l15-4v18l-15 7z" fill="#7d0d0d" /><g fill="#fff" fontFamily="Lato, sans-serif" fontWeight="900"><text x="16" y="22" textAnchor="middle" fontSize="15">SW</text><text x="22" y="31" textAnchor="middle" fontSize="9">2019</text></g></svg> },
];

function Taskbar() {
  return (
    <footer className="grid h-[60px] shrink-0 grid-cols-[1fr_auto_1fr] items-center bg-gradient-to-r from-[#d4ede7] via-[#c5efec] via-30% to-[#cdf0f2]">
      <span />
      <div className="flex gap-[7px]">
        {apps.map((a) => (
          <button key={a.name} aria-label={a.name} className={`flex h-12 w-12 flex-col items-center rounded ${a.hot ? 'bg-white/50' : ''}`}>
            <span className="flex h-[46px] items-center">{a.art}</span>
            {a.dot && <i className="-mt-0.5 h-1 w-2 shrink-0 rounded-full bg-[#6d8c8c]" />}
            {a.wide && <i className="-mt-0.5 h-1 w-5 shrink-0 rounded-full bg-[#2a7f84]" />}
          </button>
        ))}
      </div>
      <div className="flex items-center justify-end pr-[17px] text-[#1c2426]">
        <button aria-label="隐藏的图标" className="w-[31px]"><ChevronUp size={20} strokeWidth={1.5} /></button>
        <button aria-label="云盘" className="w-[30px]"><svg width="21" height="15" viewBox="0 0 21 15" fill="#8f9296" stroke="#222"><path d="M5 14a4 4 0 0 1-1-8 7 7 0 0 1 12 0 4 4 0 0 1 0 8z" /><path d="M3 12l8-5 8 5-2 1H5z" fill="#eee" stroke="none" /></svg></button>
        <button aria-label="同步" className="w-9"><svg width="21" height="21" viewBox="0 0 21 21" fill="none" stroke="currentColor" strokeWidth="1.4"><path d="M1 11C1 1 14-2 19 5M19 0v6h-6M8 20c-3-1-5-3-6-5M1 20v-6h6" /><circle cx="15" cy="15" r="5" fill="#f39a17" stroke="none" /></svg></button>
        <button aria-label="麦克风" className="w-[30px]"><Mic size={20} strokeWidth={1.6} className="text-[#2d5a6b]" /></button>
        <button className="w-[50px] pl-1 text-left text-lg text-[#55706f]">英</button>
        <button aria-label="搜狗输入法" className="w-[46px]"><SogouMark /></button>
        <button aria-label="网络" className="w-[30px]"><Wifi size={20} strokeWidth={2} /></button>
        <button aria-label="音量" className="w-[30px]"><Volume2 size={19} strokeWidth={1.6} /></button>
        <button aria-label="电池"><svg width="20" height="16" viewBox="0 0 20 16" fill="#14191a"><path d="M7 4h11v3h2v4h-2v3H4v-3h2V8z" /><path d="M1 2V0h1v2h3V0h1v2h1v4H5v5H3V6H0V2z" /></svg></button>
      </div>
    </footer>
  );
}

export default function App() {
  return (
    <div className="flex min-h-screen flex-col overflow-hidden bg-[#5d9c98] font-['Open_Sans','Noto_Sans_CJK_SC',sans-serif]">
      <div className="relative flex flex-1 bg-[linear-gradient(to_bottom,#86aab4_0%,#86aab4_50%,#5a9a96_100%)]">
        <SolidWorksWindow />
        <PresentationWindow />
        <div className="absolute bottom-0 left-0 h-[5px] w-[75%] bg-[#4f7472]" />
        <div className="absolute bottom-0 left-[34.4%] h-[5px] w-[32.3%] bg-[#2c2c2c]" />
        {/* reeds along the shore of the wallpaper */}
        <svg viewBox="0 0 140 28" preserveAspectRatio="none" className="absolute bottom-1 right-[110px] h-[27px] w-[140px]" aria-hidden="true">
          <path d="M20 0h120v27l-2-8-3 6-2-10-4 9-3-11-3 9-3-12-4 10-3-12-4 9-3-10-4 8-4-9-4 8-3-9-5 6-4-7-5 6-5-7-5 5-6-6-6 4z" fill="#3c6353" />
          <path d="M0 0h140v14l-2-5-3 4-2-6-4 5-3-6-3 4-4-6-4 5-4-6-4 4-5-5-4 4-5-5-5 3-6-4-6 4-6-5-7 4-7-4-8 3-8-4z" fill="#a08a70" />
        </svg>
        <ImeBar />
      </div>
      <Taskbar />
    </div>
  );
}
